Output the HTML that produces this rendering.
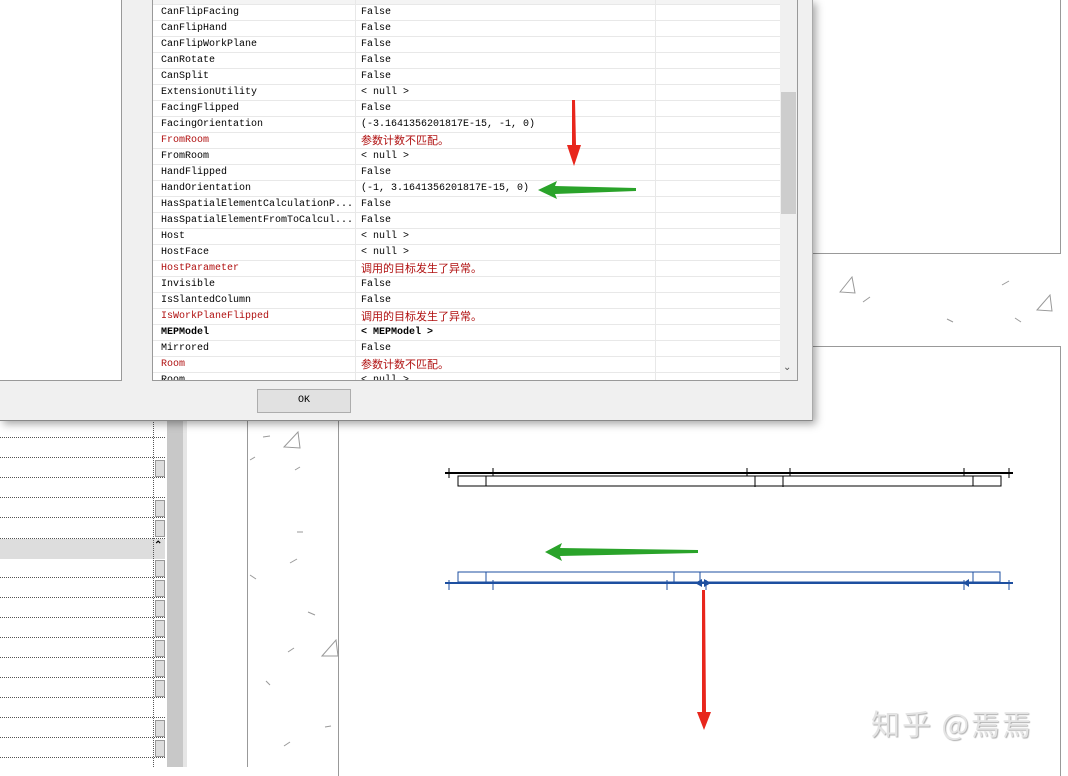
<!DOCTYPE html>
<html><head><meta charset="utf-8"><style>
*{margin:0;padding:0;box-sizing:border-box}
body{width:1068px;height:767px;overflow:hidden;background:#fff;position:relative;font-family:"Liberation Mono","Noto Sans CJK SC",monospace}
.a{position:absolute}
.row{position:absolute;left:153px;width:627px;height:16px;border-bottom:1px solid #e8e8e8;font-size:10px;line-height:16px;color:#000;white-space:nowrap}
.row span{position:absolute;top:0}
.n{left:8px}.v{left:208px}
.red{color:#b01010}
.row span.cn{font-family:"Noto Sans CJK SC",sans-serif;font-size:11px;line-height:14px;top:0}
.b{font-weight:bold}
.lr{position:absolute;left:0;width:165px;height:20px;border-bottom:1px dotted #555}
.sq{position:absolute;left:155px;width:10px;height:17px;background:#ddd;border:1px solid #999}
</style></head><body>
<div class="a" style="left:812px;top:0;width:249px;height:254px;border-right:1px solid #999;border-bottom:1px solid #999"></div>
<div class="a" style="left:338px;top:346px;width:723px;height:430px;border-top:1px solid #999;border-right:1px solid #999;border-left:1px solid #999"></div>
<div class="a" style="left:247px;top:420px;width:1px;height:347px;background:#999"></div>
<div class="a" style="left:0;top:420px;width:167px;height:347px;background:#fff"></div>
<div class="lr" style="top:418px"></div><div class="lr" style="top:438px"></div><div class="lr" style="top:458px"></div><div class="lr" style="top:478px"></div><div class="lr" style="top:498px"></div><div class="lr" style="top:518px;height:21px"></div>
<div class="a" style="left:0;top:539px;width:165px;height:20px;background:#ddd"></div>
<div class="a" style="left:154px;top:540px;font-size:10px;font-weight:bold">&#8963;</div>
<div class="lr" style="top:558px"></div><div class="lr" style="top:578px"></div><div class="lr" style="top:598px"></div><div class="lr" style="top:618px"></div><div class="lr" style="top:638px"></div><div class="lr" style="top:658px"></div><div class="lr" style="top:678px"></div><div class="lr" style="top:698px"></div><div class="lr" style="top:718px"></div><div class="lr" style="top:738px"></div>
<div class="a" style="left:153px;top:420px;width:1px;height:347px;border-left:1px dotted #555"></div>
<div class="sq" style="top:460px"></div><div class="sq" style="top:500px"></div><div class="sq" style="top:520px"></div><div class="sq" style="top:560px"></div><div class="sq" style="top:580px"></div><div class="sq" style="top:600px"></div><div class="sq" style="top:620px"></div><div class="sq" style="top:640px"></div><div class="sq" style="top:660px"></div><div class="sq" style="top:680px"></div><div class="sq" style="top:720px"></div><div class="sq" style="top:740px"></div>
<div class="a" style="left:167px;top:420px;width:16px;height:347px;background:#c8c8c8"></div>
<div class="a" style="left:183px;top:420px;width:4px;height:347px;background:#e6e6e6"></div>
<svg class="a" style="left:0;top:0" width="1068" height="767">
<g fill="none" stroke="#999" stroke-width="1">
<path d="M840 292 L852 277 L855 293 Z"/><path d="M1037 310 L1050 295 L1052 311 Z"/><path d="M284 447 L298 432 L300 448 Z"/><path d="M322 656 L336 640 L338 656 Z"/>
<path d="M863 302 L870 297"/><path d="M947 319 L953 322"/><path d="M1002 285 L1009 281"/><path d="M1015 318 L1021 322"/><path d="M263 437 L270 436"/><path d="M295 470 L300 467"/><path d="M297 532 L303 532"/><path d="M290 563 L297 559"/><path d="M250 575 L256 579"/><path d="M308 612 L315 615"/><path d="M288 652 L294 648"/><path d="M266 681 L270 685"/><path d="M325 727 L331 726"/><path d="M284 746 L290 742"/><path d="M250 460 L255 457"/>
</g>
<g fill="none" stroke="#000" stroke-width="1">
<path d="M445 473 H1013" stroke-width="2"/><rect x="458" y="476" width="543" height="10"/><path d="M486 476 V486 M755 476 V487 M783 476 V487 M973 476 V486"/><path d="M449 468 V478 M493 468 V476 M747 468 V476 M790 468 V476 M964 468 V476 M1009 468 V478"/>
</g>
<g fill="none" stroke="#1d4fa0" stroke-width="1">
<path d="M445 583 H1013" stroke-width="2"/><rect x="458" y="572" width="542" height="10"/><path d="M486 572 V583 M674 572 V583 M700 572 V583 M973 572 V583"/><path d="M449 580 V590 M493 580 V590 M667 580 V590 M706 580 V590 M964 580 V590 M1009 580 V590"/>
</g>
<path d="M695 583 L702 579 L702 587 Z M711 583 L704 579 L704 587 Z M963 583 L969 579 L969 587 Z" fill="#1d4fa0"/>
<path d="M698 550 L560 548 L562 543 L545 552 L562 561 L560 556 L698 553 Z" fill="#2aa32a"/>
<path d="M702 590 L705 590 L706 712 L711 712 L704 730 L697 712 L702 712 Z" fill="#e8261c"/>
</svg>
<div class="a" style="left:0;top:0;width:813px;height:421px;background:#f0f0f0;border-right:1px solid #aaa;border-bottom:1px solid #888;box-shadow:3px 3px 8px rgba(0,0,0,.35)"></div>
<div class="a" style="left:0;top:0;width:122px;height:381px;background:#fff;border-right:1px solid #999;border-bottom:1px solid #999"></div>
<div class="a" style="left:152px;top:0;width:646px;height:381px;background:#fff;border:1px solid #999;border-top:none"></div>
<div class="a" style="left:153px;top:0;width:627px;height:5px;background:#f4f4f4;border-bottom:1px solid #e8e8e8"></div>
<div class="a" style="left:355px;top:0;width:1px;height:380px;background:#e8e8e8"></div>
<div class="a" style="left:655px;top:0;width:1px;height:380px;background:#e8e8e8"></div>
<div style="position:absolute;left:0;top:0;width:780px;height:380px;overflow:hidden">
<div class="row" style="top:5px"><span class="n">CanFlipFacing</span><span class="v">False</span></div>
<div class="row" style="top:21px"><span class="n">CanFlipHand</span><span class="v">False</span></div>
<div class="row" style="top:37px"><span class="n">CanFlipWorkPlane</span><span class="v">False</span></div>
<div class="row" style="top:53px"><span class="n">CanRotate</span><span class="v">False</span></div>
<div class="row" style="top:69px"><span class="n">CanSplit</span><span class="v">False</span></div>
<div class="row" style="top:85px"><span class="n">ExtensionUtility</span><span class="v">&lt; null &gt;</span></div>
<div class="row" style="top:101px"><span class="n">FacingFlipped</span><span class="v">False</span></div>
<div class="row" style="top:117px"><span class="n">FacingOrientation</span><span class="v">(-3.1641356201817E-15, -1, 0)</span></div>
<div class="row red" style="top:133px"><span class="n">FromRoom</span><span class="v cn">参数计数不匹配。</span></div>
<div class="row" style="top:149px"><span class="n">FromRoom</span><span class="v">&lt; null &gt;</span></div>
<div class="row" style="top:165px"><span class="n">HandFlipped</span><span class="v">False</span></div>
<div class="row" style="top:181px"><span class="n">HandOrientation</span><span class="v">(-1, 3.1641356201817E-15, 0)</span></div>
<div class="row" style="top:197px"><span class="n">HasSpatialElementCalculationP...</span><span class="v">False</span></div>
<div class="row" style="top:213px"><span class="n">HasSpatialElementFromToCalcul...</span><span class="v">False</span></div>
<div class="row" style="top:229px"><span class="n">Host</span><span class="v">&lt; null &gt;</span></div>
<div class="row" style="top:245px"><span class="n">HostFace</span><span class="v">&lt; null &gt;</span></div>
<div class="row red" style="top:261px"><span class="n">HostParameter</span><span class="v cn">调用的目标发生了异常。</span></div>
<div class="row" style="top:277px"><span class="n">Invisible</span><span class="v">False</span></div>
<div class="row" style="top:293px"><span class="n">IsSlantedColumn</span><span class="v">False</span></div>
<div class="row red" style="top:309px"><span class="n">IsWorkPlaneFlipped</span><span class="v cn">调用的目标发生了异常。</span></div>
<div class="row b" style="top:325px"><span class="n">MEPModel</span><span class="v">&lt; MEPModel &gt;</span></div>
<div class="row" style="top:341px"><span class="n">Mirrored</span><span class="v">False</span></div>
<div class="row red" style="top:357px"><span class="n">Room</span><span class="v cn">参数计数不匹配。</span></div>
<div class="row" style="top:373px"><span class="n">Room</span><span class="v">&lt; null &gt;</span></div>
</div>
<div class="a" style="left:780px;top:0;width:17px;height:380px;background:#f0f0f0"></div>
<div class="a" style="left:781px;top:92px;width:15px;height:122px;background:#cdcdcd"></div>
<div class="a" style="left:783px;top:362px;font-size:10px;color:#555">&#8964;</div>
<div class="a" style="left:257px;top:389px;width:94px;height:24px;background:#e1e1e1;border:1px solid #adadad;font-size:10px;line-height:22px;text-align:center">OK</div>
<svg class="a" style="left:0;top:0" width="812" height="420">
<path d="M572 100 L575 100 L576 145 L581 145 L574 166 L567 145 L572 145 Z" fill="#e8261c"/>
<path d="M636 188 L555 186 L557 181 L538 190 L557 199 L555 194 L636 191 Z" fill="#2aa32a"/>
</svg>
<div class="a" style="left:871px;top:702px;font-family:'Noto Sans CJK SC',sans-serif;font-size:29px;color:#e4e4e4;text-shadow:1px 1px 1px #b0b0b0;letter-spacing:2px;white-space:nowrap">知乎 @焉焉</div>
</body></html>
